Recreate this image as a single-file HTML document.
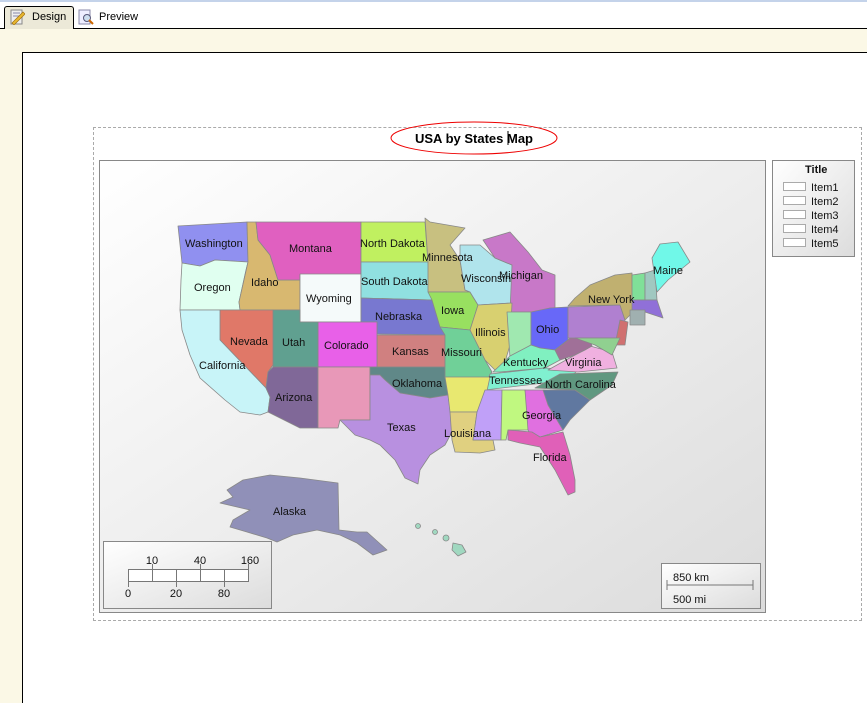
<!DOCTYPE html>
<html><head><meta charset="utf-8"><style>
*{margin:0;padding:0;box-sizing:border-box}
body{width:867px;height:703px;overflow:hidden;background:#fff;font-family:"Liberation Sans",Arial,sans-serif;font-size:11px;position:relative}
.abs{position:absolute}
</style></head><body>
<div class="abs" style="left:0;top:0;width:867px;height:2px;background:#c4d3ea"></div>
<div class="abs" style="left:0;top:28px;width:867px;height:1px;background:#000"></div>
<div class="abs" style="left:4px;top:6px;width:70px;height:23px;background:#ece9d8;border:1px solid #000;border-bottom:none;border-radius:3px 3px 0 0"></div>
<svg class="abs" style="left:9px;top:9px" width="16" height="16" viewBox="0 0 16 16"><rect x="2" y="1" width="11" height="14" fill="#eee" stroke="#888"/><line x1="4" y1="4" x2="11" y2="4" stroke="#88a"/><line x1="4" y1="7" x2="11" y2="7" stroke="#88a"/><path d="M3 14 L14 3 L16 5 L5 16Z" fill="#e8b830" stroke="#a07010" stroke-width=".7"/></svg>
<div class="abs" style="left:32px;top:11px">Design</div>
<svg class="abs" style="left:78px;top:9px" width="16" height="16" viewBox="0 0 16 16"><rect x="1" y="1" width="11" height="14" fill="#eef" stroke="#88a"/><circle cx="9" cy="9" r="3.5" fill="#cde" stroke="#557"/><line x1="11" y1="11" x2="15" y2="15" stroke="#c60" stroke-width="2"/></svg>
<div class="abs" style="left:99px;top:11px">Preview</div>
<div class="abs" style="left:0;top:29px;width:867px;height:674px;background:#fbf8e6"></div>
<div class="abs" style="left:22px;top:52px;width:845px;height:651px;background:#fff;border-left:1px solid #000;border-top:1px solid #000"></div>
<div class="abs" style="left:93px;top:127px;width:769px;height:494px;border:1px dashed #aaa"></div>
<svg class="abs" style="left:0;top:0" width="867" height="703">
<defs><linearGradient id="g" x1="0" y1="0" x2="1" y2="1"><stop offset="0" stop-color="#fff"/><stop offset="1" stop-color="#dcdcdc"/></linearGradient></defs>
<ellipse cx="474" cy="138" rx="83" ry="16" fill="none" stroke="#e00" stroke-width="1"/>
<text x="474" y="143" text-anchor="middle" font-weight="bold" font-size="13" font-family="Liberation Sans">USA by States Map</text>
<line x1="508" y1="131" x2="508" y2="145" stroke="#000"/>
<rect x="99.5" y="160.5" width="666" height="452" fill="url(#g)" stroke="#888"/>
<rect x="772.5" y="160.5" width="82" height="96" fill="url(#g)" stroke="#888"/>
<g stroke="#888" stroke-width="0.8" stroke-linejoin="round">
<polygon fill="#9090f0" points="178,226 247,222 248,262 215,260 200,266 182,263"/>
<polygon fill="#e0fff0" points="182,263 200,266 215,260 248,262 246,270 239,302 240,310 180,310 181,280"/>
<polygon fill="#d8b870" points="247,222 256,222 258,240 270,255 278,280 300,280 300,310 240,310 239,302 248,262"/>
<polygon fill="#e060c0" points="256,222 361,222 361,275 300,275 300,280 278,280 270,255 258,240"/>
<polygon fill="#f5fafa" points="300,274 361,274 361,322 300,322"/>
<polygon fill="#c0f060" points="361,222 425,222 428,262 361,262"/>
<polygon fill="#90e0e0" points="361,262 428,262 432,300 361,298"/>
<polygon fill="#7878d0" points="361,298 432,300 440,325 445,335 377,334 377,322 361,322"/>
<polygon fill="#d08080" points="377,335 445,335 445,367 377,367"/>
<polygon fill="#e860e8" points="318,322 377,322 377,367 318,367"/>
<polygon fill="#60a090" points="273,310 300,310 300,322 318,322 318,367 273,367"/>
<polygon fill="#e07868" points="220,310 273,310 273,365 268,372 266,388 220,340"/>
<polygon fill="#c8f4f8" points="180,310 220,310 220,340 266,388 270,397 268,412 260,415 240,412 225,400 200,378 190,355 182,330"/>
<polygon fill="#806898" points="273,367 318,367 318,428 300,428 268,412 270,397 266,388 268,372"/>
<polygon fill="#e898b8" points="318,367 370,367 370,420 340,420 338,428 318,428"/>
<polygon fill="#608888" points="370,367 445,367 448,395 430,398 400,393 385,380 380,375 370,375"/>
<polygon fill="#b890e0" points="370,375 380,375 385,380 400,393 430,398 448,395 450,410 453,430 445,445 430,455 420,470 418,484 405,478 395,460 380,445 370,440 355,435 340,420 370,420"/>
<polygon fill="#c8c080" points="425,218 430,222 465,228 450,245 460,260 465,290 470,292 428,292 428,262"/>
<polygon fill="#98e060" points="428,292 470,292 478,305 470,330 440,327 432,300"/>
<polygon fill="#b0e4ec" points="460,245 480,245 495,258 512,265 512,303 478,305 470,292 465,290 460,260"/>
<polygon fill="#c878c8" points="483,240 510,232 528,252 542,270 555,275 555,310 531,312 510,312 512,265 495,258"/>
<polygon fill="#d8d070" points="478,305 512,303 510,345 505,362 495,370 485,360 475,340 470,330"/>
<polygon fill="#70d098" points="440,327 470,330 475,340 485,360 492,372 488,378 445,378 445,335"/>
<polygon fill="#a0e8b0" points="507,312 531,312 531,345 510,358"/>
<polygon fill="#6868f8" points="531,312 550,308 568,307 568,340 555,350 540,348 531,345"/>
<polygon fill="#80f0c0" points="510,356 531,345 540,348 555,350 560,360 545,368 500,372 493,372"/>
<polygon fill="#80f0d0" points="490,374 545,368 578,370 568,380 485,390"/>
<polygon fill="#e8e870" points="445,377 490,377 485,400 477,412 450,412 448,395"/>
<polygon fill="#e0d080" points="450,412 477,412 473,440 493,440 495,450 480,453 455,452 452,440"/>
<polygon fill="#c0a0f8" points="485,390 502,390 501,440 473,440 477,412"/>
<polygon fill="#c0f880" points="502,390 525,390 532,430 508,430 506,440 501,440"/>
<polygon fill="#e070e0" points="525,390 545,390 565,412 563,430 540,437 532,438 528,430"/>
<polygon fill="#e060b8" points="508,430 532,432 540,437 563,432 570,455 575,480 575,492 568,495 555,470 540,447 520,443 508,440"/>
<polygon fill="#6078a0" points="543,390 575,390 590,400 570,420 563,430 548,405"/>
<polygon fill="#609880" points="535,388 560,374 618,372 612,385 590,400 575,390"/>
<polygon fill="#f0b0e0" points="548,370 575,355 590,346 612,352 617,368 578,372"/>
<polygon fill="#a07098" points="555,350 568,340 578,330 590,340 592,346 585,350 575,355 560,360"/>
<polygon fill="#b080d0" points="568,307 620,305 625,320 620,338 568,338"/>
<polygon fill="#c0b070" points="575,298 590,285 615,275 632,273 633,312 625,320 620,305 568,306"/>
<polygon fill="#d07070" points="620,320 628,322 625,345 615,345 617,335"/>
<polygon fill="#90d090" points="575,338 620,338 612,355 595,345"/>
<polygon fill="#80e098" points="632,275 645,273 645,300 632,300"/>
<polygon fill="#a0c8c0" points="645,273 655,270 657,300 645,300"/>
<polygon fill="#70f8e8" points="652,258 660,244 678,242 690,262 668,280 657,292"/>
<polygon fill="#9070d8" points="632,300 657,300 663,318 645,312 632,310"/>
<polygon fill="#a0b0b0" points="630,310 645,310 645,325 630,325"/>
<polygon fill="#9090b8" points="227,490 243,480 270,475 300,478 338,483 339,530 357,532 367,532 387,550 373,555 357,543 340,535 317,530 293,535 277,542 267,538 247,532 230,527 233,520 250,510 220,503 233,497"/>
<g fill="#a0d8c0"><circle cx="418" cy="526" r="2.5"/><circle cx="435" cy="532" r="2.5"/><circle cx="446" cy="538" r="3"/><polygon points="453,543 462,545 466,552 458,556 452,550"/></g>
</g>
<g font-family="Liberation Sans" font-size="11" fill="#111">
<text x="185" y="247">Washington</text><text x="194" y="291">Oregon</text><text x="251" y="286">Idaho</text>
<text x="289" y="252">Montana</text><text x="306" y="302">Wyoming</text><text x="360" y="247">North Dakota</text>
<text x="361" y="285">South Dakota</text><text x="375" y="320">Nebraska</text><text x="392" y="355">Kansas</text>
<text x="324" y="349">Colorado</text><text x="282" y="346">Utah</text><text x="230" y="345">Nevada</text>
<text x="199" y="369">California</text><text x="275" y="401">Arizona</text><text x="392" y="387">Oklahoma</text>
<text x="387" y="431">Texas</text><text x="422" y="261">Minnesota</text><text x="441" y="314">Iowa</text>
<text x="461" y="282">Wisconsin</text><text x="499" y="279">Michigan</text><text x="475" y="336">Illinois</text>
<text x="441" y="356">Missouri</text><text x="503" y="366">Kentucky</text><text x="536" y="333">Ohio</text>
<text x="489" y="384">Tennessee</text><text x="545" y="388">North Carolina</text><text x="565" y="366">Virginia</text>
<text x="588" y="303">New York</text><text x="653" y="274">Maine</text><text x="522" y="419">Georgia</text>
<text x="444" y="437">Louisiana</text><text x="533" y="461">Florida</text><text x="273" y="515">Alaska</text>
</g>
<rect x="103.5" y="541.5" width="168" height="67" fill="url(#g)" stroke="#888"/>
<rect x="128.5" y="569.5" width="120" height="12" fill="#fff" stroke="#777"/>
<g stroke="#777"><line x1="152.5" y1="564" x2="152.5" y2="582"/><line x1="176.5" y1="570" x2="176.5" y2="587"/><line x1="200.5" y1="564" x2="200.5" y2="582"/><line x1="224.5" y1="570" x2="224.5" y2="587"/><line x1="248.5" y1="564" x2="248.5" y2="582"/><line x1="128.5" y1="570" x2="128.5" y2="587"/></g>
<g font-family="Liberation Sans" font-size="11" fill="#111" text-anchor="middle">
<text x="152" y="564">10</text><text x="200" y="564">40</text><text x="250" y="564">160</text>
<text x="128" y="597">0</text><text x="176" y="597">20</text><text x="224" y="597">80</text></g>
<rect x="661.5" y="563.5" width="99" height="45" fill="url(#g)" stroke="#888"/>
<path d="M667 580 V590 M667 585 H753 M753 580 V590" stroke="#777" fill="none"/>
<g font-family="Liberation Sans" font-size="11" fill="#111"><text x="673" y="581">850 km</text><text x="673" y="603">500 mi</text>
<text x="805" y="173" font-weight="bold">Title</text>
<text x="811" y="191">Item1</text><text x="811" y="205">Item2</text><text x="811" y="219">Item3</text><text x="811" y="233">Item4</text><text x="811" y="247">Item5</text></g>
<g fill="#fff" stroke="#aaa"><rect x="783.5" y="182.5" width="22" height="8"/><rect x="783.5" y="196.5" width="22" height="8"/><rect x="783.5" y="210.5" width="22" height="8"/><rect x="783.5" y="224.5" width="22" height="8"/><rect x="783.5" y="238.5" width="22" height="8"/></g>
</svg>
</body></html>
